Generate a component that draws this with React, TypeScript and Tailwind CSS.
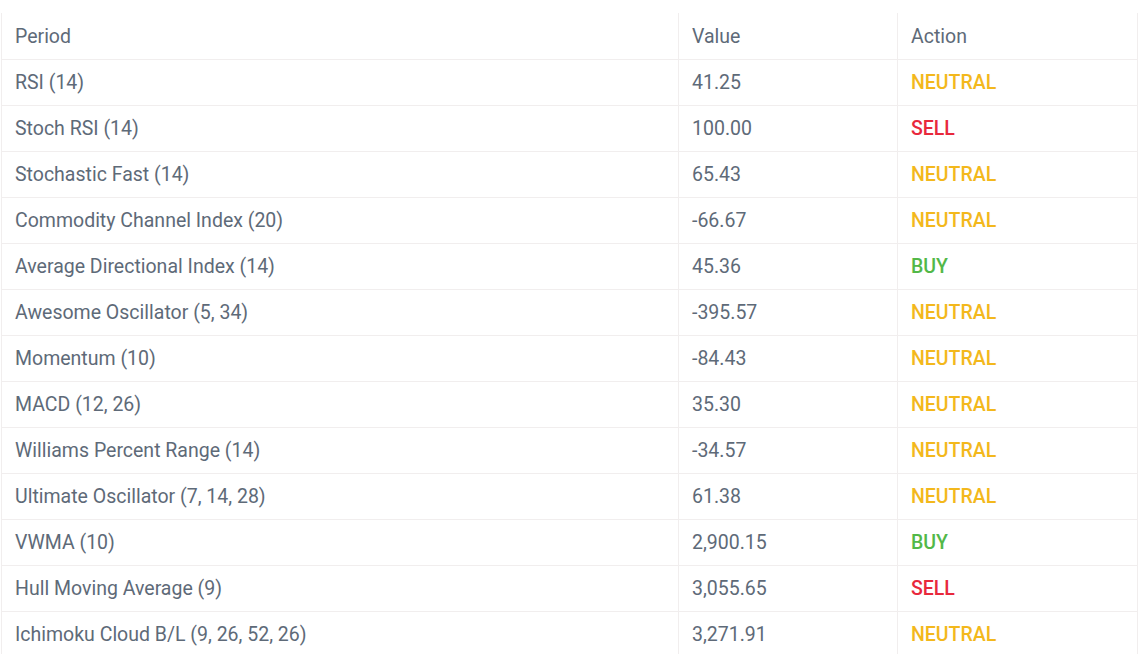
import React from "react";

type Row = { period: string; value: string; action: "NEUTRAL" | "SELL" | "BUY" };

const ROWS: Row[] = [
  { period: "RSI (14)", value: "41.25", action: "NEUTRAL" },
  { period: "Stoch RSI (14)", value: "100.00", action: "SELL" },
  { period: "Stochastic Fast (14)", value: "65.43", action: "NEUTRAL" },
  { period: "Commodity Channel Index (20)", value: "-66.67", action: "NEUTRAL" },
  { period: "Average Directional Index (14)", value: "45.36", action: "BUY" },
  { period: "Awesome Oscillator (5, 34)", value: "-395.57", action: "NEUTRAL" },
  { period: "Momentum (10)", value: "-84.43", action: "NEUTRAL" },
  { period: "MACD (12, 26)", value: "35.30", action: "NEUTRAL" },
  { period: "Williams Percent Range (14)", value: "-34.57", action: "NEUTRAL" },
  { period: "Ultimate Oscillator (7, 14, 28)", value: "61.38", action: "NEUTRAL" },
  { period: "VWMA (10)", value: "2,900.15", action: "BUY" },
  { period: "Hull Moving Average (9)", value: "3,055.65", action: "SELL" },
  { period: "Ichimoku Cloud B/L (9, 26, 52, 26)", value: "3,271.91", action: "NEUTRAL" },
];

const ACTION_COLOR: Record<Row["action"], string> = {
  NEUTRAL: "text-[#f3b81c]",
  SELL: "text-[#e8283c]",
  BUY: "text-[#52b848]",
};

export default function App() {
  return (
    <div className="min-h-screen bg-white pt-[13px] pl-px pr-[3px] font-['Roboto',sans-serif] text-[19.5px] text-[#5e6a78]">
      <table className="w-[1136px] table-fixed border-collapse">
        <colgroup>
          <col className="w-[677px]" />
          <col className="w-[219px]" />
          <col className="w-[240px]" />
        </colgroup>
        <thead>
          <tr className="h-[46px] border-b border-[#f1eeee]">
            <th className="border-x border-[#f1eeee] px-[13px] pt-[2px] text-left font-normal">Period</th>
            <th className="border-x border-[#f1eeee] px-[13px] pt-[2px] text-left font-normal">Value</th>
            <th className="border-x border-[#f1eeee] px-[13px] pt-[2px] text-left font-normal">Action</th>
          </tr>
        </thead>
        <tbody>
          {ROWS.map((r) => (
            <tr key={r.period} className="h-[46px] border-b border-[#f1eeee]">
              <td className="border-x border-[#f1eeee] px-[13px] pt-[2px]">{r.period}</td>
              <td className="border-x border-[#f1eeee] px-[13px] pt-[2px]">{r.value}</td>
              <td className={`border-x border-[#f1eeee] px-[13px] pt-[2px] font-medium ${ACTION_COLOR[r.action]}`}>
                {r.action}
              </td>
            </tr>
          ))}
        </tbody>
      </table>
    </div>
  );
}
